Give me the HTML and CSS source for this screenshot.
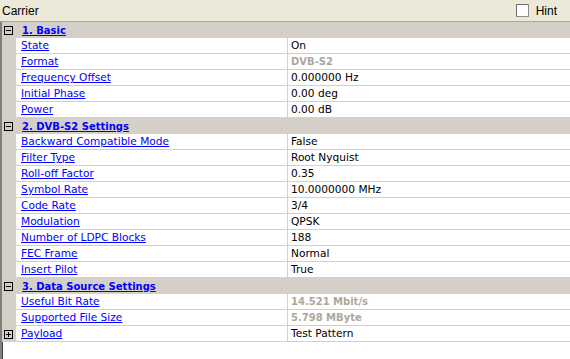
FILE: index.html
```html
<!DOCTYPE html>
<html lang="en">
<head>
    <meta charset="UTF-8">
    <title>Carrier</title>
    <link rel="stylesheet" href="styles.css">
</head>
<body>
    <div class="titlebar">
        <span class="title">Carrier</span>
        <label class="hint"><span class="check"></span>Hint</label>
    </div>
    <div class="grid">
        <div class="section">
            <span class="toggle minus"></span>
            <a class="section-title">1. Basic</a>
        </div>
        <div class="row"><span class="gutter"></span><a class="name">State</a><span class="value">On</span></div>
        <div class="row"><span class="gutter"></span><a class="name">Format</a><span class="value ro">DVB-S2</span></div>
        <div class="row"><span class="gutter"></span><a class="name">Frequency Offset</a><span class="value">0.000000 Hz</span></div>
        <div class="row"><span class="gutter"></span><a class="name">Initial Phase</a><span class="value">0.00 deg</span></div>
        <div class="row"><span class="gutter"></span><a class="name">Power</a><span class="value">0.00 dB</span></div>

        <div class="section">
            <span class="toggle minus"></span>
            <a class="section-title">2. DVB-S2 Settings</a>
        </div>
        <div class="row"><span class="gutter"></span><a class="name">Backward Compatible Mode</a><span class="value">False</span></div>
        <div class="row"><span class="gutter"></span><a class="name">Filter Type</a><span class="value">Root Nyquist</span></div>
        <div class="row"><span class="gutter"></span><a class="name">Roll-off Factor</a><span class="value">0.35</span></div>
        <div class="row"><span class="gutter"></span><a class="name">Symbol Rate</a><span class="value">10.0000000 MHz</span></div>
        <div class="row"><span class="gutter"></span><a class="name">Code Rate</a><span class="value">3/4</span></div>
        <div class="row"><span class="gutter"></span><a class="name">Modulation</a><span class="value">QPSK</span></div>
        <div class="row"><span class="gutter"></span><a class="name">Number of LDPC Blocks</a><span class="value">188</span></div>
        <div class="row"><span class="gutter"></span><a class="name">FEC Frame</a><span class="value">Normal</span></div>
        <div class="row"><span class="gutter"></span><a class="name">Insert Pilot</a><span class="value">True</span></div>

        <div class="section">
            <span class="toggle minus"></span>
            <a class="section-title">3. Data Source Settings</a>
        </div>
        <div class="row"><span class="gutter"></span><a class="name">Useful Bit Rate</a><span class="value ro">14.521 Mbit/s</span></div>
        <div class="row"><span class="gutter"></span><a class="name">Supported File Size</a><span class="value ro">5.798 MByte</span></div>
        <div class="row"><span class="gutter"><span class="toggle plus"></span></span><a class="name">Payload</a><span class="value">Test Pattern</span></div>
    </div>
</body>
</html>
```

FILE: styles.css
```css
body {
    margin: 0;
    font-family: "DejaVu Sans", "Liberation Sans", sans-serif;
    font-size: 10.6px;
    background-color: #fff;
    width: 570px;
    height: 359px;
    overflow: hidden;
}
.titlebar {
    height: 21px;
    background-color: #ece9d8;
    border-bottom: 1px solid #aca899;
    display: flex;
    align-items: center;
    justify-content: space-between;
    padding: 0 0 0 2px;
}
.title {
    font-family: "Liberation Sans", sans-serif;
    font-size: 12px;
}
.hint {
    display: flex;
    align-items: center;
    font-family: "Liberation Sans", sans-serif;
    font-size: 12px;
    margin-right: 13px;
}
.check {
    width: 11px;
    height: 11px;
    background-color: #fff;
    border: 1px solid #8e8f8f;
    border-top-color: #6f6f6f;
    border-left-color: #6f6f6f;
    margin-right: 7px;
}
.grid {
    border-left: 2px solid #808080;
    min-height: 337px;
    box-sizing: border-box;
    box-shadow: inset 1px 0 0 #404040;
}
.section {
    height: 16px;
    background-color: #d4d0c8;
    display: flex;
    align-items: center;
}
.section-title {
    font-weight: bold;
    color: #0000ff;
    text-decoration: underline;
    margin-left: 9px;
    font-size: 10px;
}
.toggle {
    width: 7px;
    height: 7px;
    border: 1px solid #000;
    margin-left: 2px;
    position: relative;
    display: inline-block;
}
.toggle::before {
    content: "";
    position: absolute;
    left: 1px;
    top: 3px;
    width: 5px;
    height: 1px;
    background-color: #000;
}
.toggle.plus::after {
    content: "";
    position: absolute;
    left: 3px;
    top: 1px;
    width: 1px;
    height: 5px;
    background-color: #000;
}
.row {
    display: grid;
    grid-template-columns: 14px 272px 1fr;
    height: 16px;
}
.gutter {
    background-color: #d4d0c8;
    display: flex;
    align-items: center;
}
.name, .value {
    border-bottom: 1px solid #d4d0c8;
    line-height: 15px;
    white-space: nowrap;
    overflow: hidden;
}
.name {
    color: #0000ff;
    text-decoration: underline;
    padding-left: 5px;
    border-right: 1px solid #d4d0c8;
}
.value {
    padding-left: 3px;
    color: #000;
}
.value.ro {
    color: #aca899;
    font-weight: bold;
    font-size: 10px;
}
```
